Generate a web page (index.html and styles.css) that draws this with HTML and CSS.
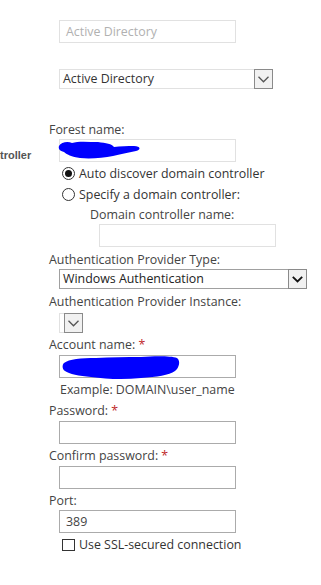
FILE: index.html
```html
<!DOCTYPE html>
<html>
<head>
<meta charset="utf-8">
<link rel="stylesheet" href="styles.css">
</head>
<body>
<div class="page">
  <div class="side">
    <div class="side-spacer"></div>
    <div class="side-label">troller</div>
  </div>
  <div class="main">
    <div class="box disabled">Active Directory</div>
    <div class="select light sel1">
      <span class="sel-text">Active Directory</span>
      <span class="sel-btn"><svg width="11" height="7" viewBox="0 0 11 7"><path d="M0.5 0.8 L5.5 5.8 L10.5 0.8" fill="none" stroke="#555" stroke-width="1.3"/></svg></span>
    </div>

    <div class="label forest">Forest name:</div>
    <div class="box light field1 scribbled">
      <svg class="scribble s1" width="84" height="20" viewBox="0 0 84 20"><path d="M1 5 C3 1 10 0 14 2 C20 0 30 1 40 1 C48 2 54 3 56 6 C62 5 70 5 76 5 C83 5 83 9 78 10 C70 12 62 13 55 15 C45 17 32 18 22 17 C14 16 8 13 6 11 C2 10 0 8 1 5 Z" fill="#0000ff"/></svg>
    </div>
    <div class="radio-row r1"><span class="radio on"></span><span>Auto discover domain controller</span></div>
    <div class="radio-row"><span class="radio"></span><span>Specify a domain controller:</span></div>
    <div class="label dc">Domain controller name:</div>
    <div class="box light dcbox"></div>

    <div class="label">Authentication Provider Type:</div>
    <div class="select dark sel2">
      <span class="sel-text">Windows Authentication</span>
      <span class="sel-btn"><svg width="11" height="7" viewBox="0 0 11 7"><path d="M0.8 0.8 L5.5 5.5 L10.2 0.8" fill="none" stroke="#111" stroke-width="1.8"/></svg></span>
    </div>
    <div class="label">Authentication Provider Instance:</div>
    <div class="select small">
      <span class="sel-btn"><svg width="11" height="7" viewBox="0 0 11 7"><path d="M0.5 0.8 L5.5 5.8 L10.5 0.8" fill="none" stroke="#555" stroke-width="1.3"/></svg></span>
    </div>
    <div class="label acc">Account name: <span class="req">*</span></div>
    <div class="box dark field2 scribbled">
      <svg class="scribble s2" width="120" height="24" viewBox="0 0 120 24"><path d="M3 7 C8 3 20 2 35 2 C50 1 65 1 80 1 C95 0 110 0 116 2 C120 5 118 12 114 15 C108 19 96 21 80 22 C62 24 45 23 30 21 C18 20 8 18 4 15 C1 13 1 9 3 7 Z" fill="#0000ff"/></svg>
    </div>
    <div class="hint">Example: DOMAIN\user_name</div>
    <div class="label">Password: <span class="req">*</span></div>
    <div class="box dark"></div>
    <div class="label tight">Confirm password: <span class="req">*</span></div>
    <div class="box dark"></div>
    <div class="label tight">Port:</div>
    <div class="box dark port">389</div>
    <div class="check-row"><span class="checkbox"></span><span>Use SSL-secured connection</span></div>
  </div>
</div>
</body>
</html>
```

FILE: styles.css
```css
html, body {
  margin: 0;
  padding: 0;
  background: #ffffff;
}
body {
  font-family: "Open Sans", "Noto Sans", sans-serif;
  font-size: 12.4px;
  color: #444444;
}
.page {
  display: flex;
}
.side {
  width: 49px;
  flex: none;
  display: flex;
  flex-direction: column;
}
.side-spacer {
  height: 147px;
}
.side-label {
  white-space: nowrap;
  font-family: "Liberation Sans", sans-serif;
  font-weight: bold;
  font-size: 11px;
  line-height: 16px;
  color: #555555;
}
.main {
  display: flex;
  flex-direction: column;
  padding-top: 20px;
}
.label {
  line-height: 16px;
  height: 16px;
  margin-top: 5px;
  white-space: nowrap;
}
.label.tight {
  margin-top: 4px;
}
.req {
  color: #c0282a;
}
.box {
  position: relative;
  box-sizing: border-box;
  width: 177px;
  height: 23px;
  margin-left: 10px;
  margin-top: 2px;
  border: 1px solid #ababab;
  padding: 0 6px;
  line-height: 21px;
  color: #444444;
  background: #ffffff;
}
.box.light {
  border-color: #e1e1e1;
}
.box.disabled {
  border-color: #e1e1e1;
  color: #b1b1b1;
  margin-top: 0;
}
.select {
  box-sizing: border-box;
  display: flex;
  align-items: stretch;
  margin-left: 10px;
  height: 20px;
  border: 1px solid #e1e1e1;
  background: #ffffff;
}
.sel-text {
  flex: 1;
  padding-left: 3px;
  line-height: 18px;
  color: #444444;
  white-space: nowrap;
}
.sel-btn {
  box-sizing: border-box;
  width: 19px;
  flex: none;
  display: flex;
  align-items: center;
  justify-content: center;
  border: 1px solid #8a8a8a;
  background: #f1f1f1;
  margin: -1px -1px -1px 0;
}
.sel1 {
  width: 214px;
  margin-top: 26px;
}
.sel1 .sel-text {
  color: #333333;
}
.sel2 {
  width: 248px;
  margin-top: 1px;
  border-color: #a0a0a0;
}
.sel2 .sel-text {
  color: #222222;
}
.small {
  width: 24px;
  margin-top: 3px;
  justify-content: flex-end;
}
.label.forest {
  margin-top: 33px;
}
.field1 {
  margin-top: 1px;
}
.scribble {
  position: absolute;
  pointer-events: none;
}
.s1 {
  left: -2px;
  top: 1px;
}
.s2 {
  left: 1px;
  top: 0px;
}
.radio-row {
  display: flex;
  align-items: center;
  height: 21px;
  margin-left: 13px;
  white-space: nowrap;
  color: #333333;
}
.radio-row.r1 {
  margin-top: 1px;
}
.radio {
  box-sizing: border-box;
  width: 13px;
  height: 13px;
  border-radius: 50%;
  border: 1px solid #333333;
  margin-right: 4px;
  display: flex;
  align-items: center;
  justify-content: center;
  background: #fff;
}
.radio.on::after {
  content: "";
  width: 7px;
  height: 7px;
  border-radius: 50%;
  background: #111111;
}
.label.dc {
  margin-left: 41px;
  margin-top: 2px;
}
.dcbox {
  margin-left: 50px;
  margin-top: 1px;
}
.label.acc {
  margin-top: 4px;
}
.hint {
  margin-left: 11px;
  margin-top: 4px;
  line-height: 16px;
  height: 16px;
  white-space: nowrap;
}
.port {
  margin-top: 1px;
}
.check-row {
  display: flex;
  align-items: center;
  height: 19px;
  margin-top: 2px;
  margin-left: 13px;
  white-space: nowrap;
  color: #333333;
}
.checkbox {
  box-sizing: border-box;
  width: 13px;
  height: 12px;
  border: 1px solid #333333;
  margin-right: 4px;
  background: #fff;
}
```
